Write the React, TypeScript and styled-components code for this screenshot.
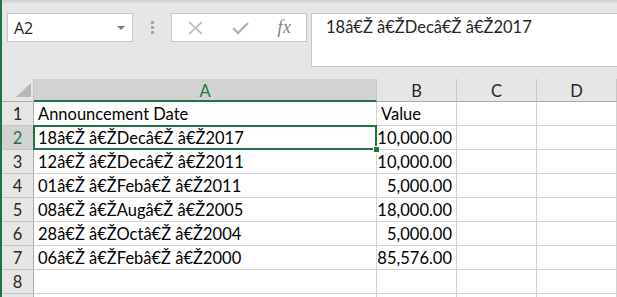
import * as React from "react";
import styled, { createGlobalStyle, css } from "styled-components";

const GREEN = "#217346";
const GRID = "#d4d4d4";
const HEAD_LINE = "#c6c6c6";
const CELL_FONT = `Lato, "Noto Sans", sans-serif`;
const UI_FONT = `"Open Sans", "Noto Sans", sans-serif`;

const GlobalStyle = createGlobalStyle`
  html, body {
    margin: 0;
    padding: 0;
    background: #e6e6e6;
    overflow: hidden;
  }
`;

const Window = styled.div`
  width: 617px;
  height: 297px;
  box-sizing: border-box;
  border-left: 2px solid ${GREEN};
  background: #e6e6e6;
  display: flex;
  flex-direction: column;
  overflow: hidden;
`;

const TopShade = styled.div`
  flex-shrink: 0;
  height: 4px;
  background: linear-gradient(#cfcfcf, #e6e6e6);
`;

const FormulaBar = styled.div`
  flex-shrink: 0;
  height: 75px;
  display: flex;
  align-items: flex-start;
  padding-top: 9px;
  box-sizing: border-box;
`;

const NameBox = styled.div`
  margin-left: 5px;
  width: 126px;
  height: 29px;
  box-sizing: border-box;
  border: 1px solid ${HEAD_LINE};
  background: #fff;
  display: flex;
  align-items: center;
  justify-content: space-between;
  padding: 0 7px 0 6px;
  font-family: ${UI_FONT};
  font-size: 16px;
  color: #262626;
`;

const DropArrow = styled.span`
  width: 0;
  height: 0;
  border-left: 4px solid transparent;
  border-right: 4px solid transparent;
  border-top: 4px solid #7a7a7a;
  margin-top: 1px;
`;

const Grip = styled.div`
  width: 38px;
  height: 29px;
  display: flex;
  flex-direction: column;
  align-items: center;
  justify-content: center;
  gap: 2px;
`;

const GripDot = styled.span`
  width: 3px;
  height: 3px;
  background: #a6a6a6;
`;

const ButtonsBox = styled.div`
  width: 136px;
  height: 29px;
  box-sizing: border-box;
  border: 1px solid ${HEAD_LINE};
  background: #fff;
  display: grid;
  grid-template-columns: 46px 45px 1fr;
  align-items: center;
  justify-items: center;
`;

const Fx = styled.span`
  font-family: "Liberation Serif", "DejaVu Serif", serif;
  font-style: italic;
  font-size: 18px;
  color: #7f7f7f;
  letter-spacing: 0.5px;
  margin-top: -1px;
`;

const FormulaInput = styled.div`
  margin-left: 4px;
  flex: 1;
  height: 54px;
  box-sizing: border-box;
  border: 1px solid ${HEAD_LINE};
  border-right: none;
  background: #fff;
  padding: 3px 0 0 14px;
  font-family: ${CELL_FONT};
  font-size: 16.5px;
  color: #262626;
`;

const Sheet = styled.div`
  flex: 1;
  background: #fff;
`;

const Row = styled.div`
  display: grid;
  grid-template-columns: 32px 343px 80px 80px 1fr;
`;

const HeadCell = styled.div<{ $active?: boolean }>`
  height: 23px;
  box-sizing: border-box;
  background: #e6e6e6;
  border-right: 1px solid ${HEAD_LINE};
  border-bottom: 1px solid #ababab;
  display: flex;
  align-items: center;
  justify-content: center;
  font-family: ${CELL_FONT};
  font-size: 16.5px;
  color: #262626;
  padding-top: 1px;
  ${(p) =>
    p.$active &&
    css`
      background: #d2d2d2;
      color: ${GREEN};
      border-bottom: 2px solid ${GREEN};
      padding-top: 2px;
    `}
`;

const Corner = styled.div`
  height: 23px;
  box-sizing: border-box;
  background: #e6e6e6;
  border-right: 1px solid ${HEAD_LINE};
  border-bottom: 1px solid #ababab;
  display: flex;
  align-items: flex-end;
  justify-content: flex-end;
  padding: 0 2px 4px 0;
`;

const CornerTriangle = styled.span`
  width: 0;
  height: 0;
  border-left: 15px solid transparent;
  border-bottom: 14px solid #b7b7b7;
`;

const RowHead = styled.div<{ $active?: boolean }>`
  height: 24px;
  box-sizing: border-box;
  background: #e6e6e6;
  border-right: 1px solid #ababab;
  border-bottom: 1px solid ${HEAD_LINE};
  display: flex;
  align-items: center;
  justify-content: center;
  font-family: ${CELL_FONT};
  font-size: 16.5px;
  color: #262626;
  ${(p) =>
    p.$active &&
    css`
      background: #d2d2d2;
      color: ${GREEN};
    `}
`;

const Cell = styled.div<{ $num?: boolean; $selected?: boolean }>`
  position: relative;
  height: 24px;
  box-sizing: border-box;
  border-right: 1px solid ${GRID};
  border-bottom: 1px solid ${GRID};
  display: flex;
  align-items: flex-end;
  justify-content: ${(p) => (p.$num ? "flex-end" : "flex-start")};
  padding: 0 4px 1px 4px;
  font-family: ${CELL_FONT};
  font-size: 16.5px;
  color: #000;
  white-space: nowrap;
  ${(p) =>
    p.$selected &&
    css`
      &::after {
        content: "";
        position: absolute;
        left: -1px;
        top: -1px;
        right: -1px;
        bottom: -1px;
        border: 2px solid ${GREEN};
      }
    `}
`;

const FillHandle = styled.span`
  position: absolute;
  right: -4px;
  bottom: -4px;
  width: 5px;
  height: 5px;
  background: ${GREEN};
  border: 1px solid #fff;
  z-index: 2;
`;

const rows: [string, string][] = [
  ["Announcement Date", "Value"],
  ["18â€Ž â€ŽDecâ€Ž â€Ž2017", "10,000.00"],
  ["12â€Ž â€ŽDecâ€Ž â€Ž2011", "10,000.00"],
  ["01â€Ž â€ŽFebâ€Ž â€Ž2011", "5,000.00"],
  ["08â€Ž â€ŽAugâ€Ž â€Ž2005", "18,000.00"],
  ["28â€Ž â€ŽOctâ€Ž â€Ž2004", "5,000.00"],
  ["06â€Ž â€ŽFebâ€Ž â€Ž2000", "85,576.00"],
  ["", ""],
];

export default function App() {
  return (
    <>
      <GlobalStyle />
      <Window>
        <TopShade />
        <FormulaBar>
          <NameBox>
            A2
            <DropArrow />
          </NameBox>
          <Grip>
            <GripDot />
            <GripDot />
            <GripDot />
          </Grip>
          <ButtonsBox>
            <svg width="17" height="14" viewBox="0 0 17 14">
              <path d="M2 1 L15 13 M15 1 L2 13" stroke="#b3b3b3" strokeWidth="1.6" fill="none" />
            </svg>
            <svg width="17" height="14" viewBox="0 0 17 14">
              <path d="M1 7 L6 12 L16 2" stroke="#b3b3b3" strokeWidth="2.4" fill="none" />
            </svg>
            <Fx>fx</Fx>
          </ButtonsBox>
          <FormulaInput>{rows[1][0]}</FormulaInput>
        </FormulaBar>
        <Sheet>
          <Row>
            <Corner>
              <CornerTriangle />
            </Corner>
            <HeadCell $active>A</HeadCell>
            <HeadCell>B</HeadCell>
            <HeadCell>C</HeadCell>
            <HeadCell>D</HeadCell>
          </Row>
          {rows.map(([date, value], i) => (
            <Row key={i}>
              <RowHead $active={i === 1}>{i + 1}</RowHead>
              <Cell $selected={i === 1}>
                {date}
                {i === 1 && <FillHandle />}
              </Cell>
              <Cell $num={i > 0}>{value}</Cell>
              <Cell />
              <Cell />
            </Row>
          ))}
          <Row>
            <RowHead />
            <Cell />
            <Cell />
            <Cell />
            <Cell />
          </Row>
        </Sheet>
      </Window>
    </>
  );
}
